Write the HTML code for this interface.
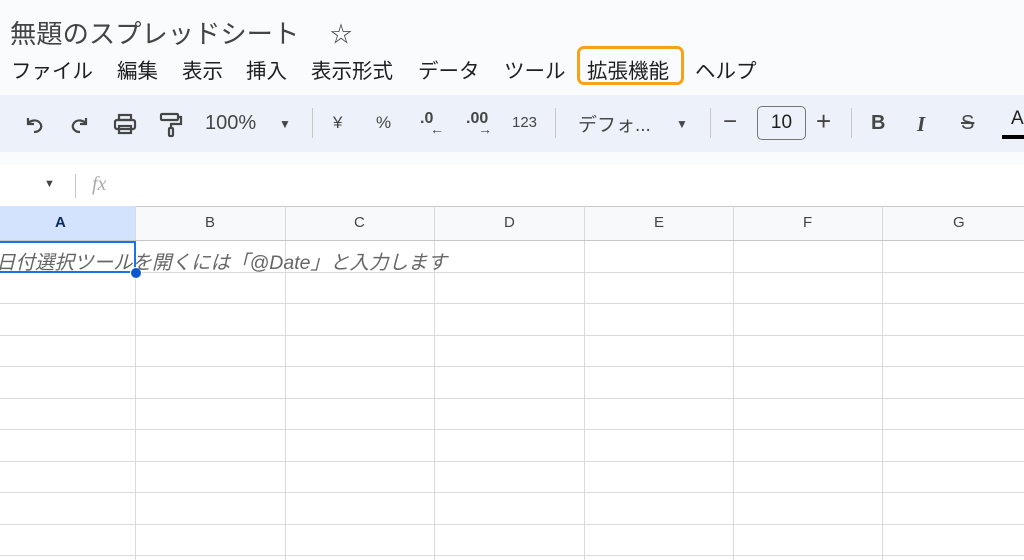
<!DOCTYPE html>
<html><head><meta charset="utf-8"><style>
*{margin:0;padding:0;box-sizing:border-box}
body{width:1024px;height:560px;overflow:hidden;background:#fff;font-family:"Liberation Sans","Noto Sans CJK JP",sans-serif;position:relative;color:#444746}
.a{position:absolute;white-space:nowrap}
.top{position:absolute;left:0;top:0;width:1024px;height:165px;background:#f9fbfd}
.tb{position:absolute;left:0;top:95px;width:1024px;height:57px;background:#edf2fa;border-radius:0}
.menu{font-size:20.5px;color:#1f1f1f;top:54px}
.ti{font-size:17px;color:#444746;top:113px}
.sep{position:absolute;top:108px;width:1px;height:30px;background:#c7c7c7}
.col{position:absolute;top:206px;height:354px;width:1px;background:#dadada}
.row{position:absolute;left:0;width:1024px;height:1px;background:#dadada}
.ch{position:absolute;top:214px;font-size:15px;color:#444}
</style></head><body>
<div class="top"></div>
<div class="a" style="left:10px;top:12px;font-size:26.3px;color:#444">無題のスプレッドシート</div>
<div class="a" style="left:330px;top:17px;font-size:22px;color:#444">☆</div>
<div class="a menu" style="left:11px">ファイル</div>
<div class="a menu" style="left:117px">編集</div>
<div class="a menu" style="left:182px">表示</div>
<div class="a menu" style="left:246px">挿入</div>
<div class="a menu" style="left:311px">表示形式</div>
<div class="a menu" style="left:418px">データ</div>
<div class="a menu" style="left:504px">ツール</div>
<div style="position:absolute;left:577px;top:46px;width:107px;height:39px;border:3px solid #f7a21a;border-radius:7px"></div>
<div class="a menu" style="left:587px">拡張機能</div>
<div class="a menu" style="left:695px">ヘルプ</div>
<div class="tb"></div>
<svg class="a" style="left:20px;top:110px" width="30" height="30" viewBox="0 0 30 30" fill="none" stroke="#444746" stroke-width="2.2"><path d="M8 8v6h6"/><path d="M8 14c2-4 9-5 12-1s0 9-6 9"/></svg>
<svg class="a" style="left:64px;top:110px" width="30" height="30" viewBox="0 0 30 30" fill="none" stroke="#444746" stroke-width="2.2"><path d="M22 8v6h-6"/><path d="M22 14c-2-4-9-5-12-1s0 9 6 9"/></svg>
<svg class="a" style="left:110px;top:110px" width="30" height="30" viewBox="0 0 30 30" fill="none" stroke="#444746" stroke-width="2.2"><rect x="9" y="5" width="12" height="5"/><rect x="5" y="10" width="20" height="9" rx="2"/><rect x="9" y="16" width="12" height="7"/></svg>
<svg class="a" style="left:156px;top:110px" width="30" height="30" viewBox="0 0 30 30" fill="none" stroke="#444746" stroke-width="2.2"><rect x="5" y="4" width="17" height="6" rx="1"/><path d="M22 7h3v7H15v4"/><rect x="13" y="18" width="4" height="8" rx="1"/></svg>
<div class="a ti" style="left:205px;font-size:20px;top:112px">100%</div>
<div class="a" style="left:279px;top:117px;font-size:12px">▼</div>
<div class="sep" style="left:312px"></div>
<div class="a ti" style="left:333px">¥</div>
<div class="a ti" style="left:376px">%</div>
<div class="a ti" style="left:420px;font-weight:bold;font-size:16px;top:110px">.0</div>
<div class="a" style="left:430px;top:121px;font-size:14px;color:#444">←</div>
<div class="a ti" style="left:466px;font-weight:bold;font-size:16px;top:110px">.00</div>
<div class="a" style="left:478px;top:121px;font-size:14px;color:#444">→</div>
<div class="a ti" style="left:512px;font-size:15px;top:114px">123</div>
<div class="sep" style="left:555px"></div>
<div class="a ti" style="left:578px;font-size:19px;top:110px">デフォ...</div>
<div class="a" style="left:676px;top:117px;font-size:12px">▼</div>
<div class="sep" style="left:710px"></div>
<div class="a" style="left:723px;top:108px;font-size:24px;color:#444">−</div>
<div style="position:absolute;left:757px;top:106px;width:49px;height:34px;border:1px solid #747775;border-radius:5px;font-size:19px;text-align:center;line-height:32px;color:#1f1f1f">10</div>
<div class="a" style="left:816px;top:106px;font-size:26px;color:#444">+</div>
<div class="sep" style="left:851px"></div>
<div class="a" style="left:871px;top:112px;font-size:20px;font-weight:bold">B</div>
<div class="a" style="left:917px;top:112px;font-size:21px;font-style:italic;font-family:'Liberation Serif',serif;font-weight:bold">I</div>
<div class="a" style="left:961px;top:112px;font-size:20px;text-decoration:line-through">S</div>
<div class="a" style="left:1011px;top:108px;font-size:19px;color:#1f1f1f">A</div>
<div style="position:absolute;left:1002px;top:135px;width:22px;height:4px;background:#000"></div>
<div class="a" style="left:44px;top:178px;font-size:11px;color:#444">▼</div>
<div style="position:absolute;left:75px;top:174px;width:1px;height:24px;background:#c7c7c7"></div>
<div class="a" style="left:92px;top:173px;font-size:20px;font-style:italic;font-family:'Liberation Serif',serif;color:#aaa">fx</div>
<div style="position:absolute;left:0;top:206px;width:1024px;height:34px;background:#f8f9fa;border-top:1px solid #c7c7c7"></div>
<div style="position:absolute;left:0;top:206px;width:135px;height:34px;background:#d3e3fd"></div>
<div class="col" style="left:135px"></div><div class="col" style="left:285px"></div><div class="col" style="left:434px"></div><div class="col" style="left:584px"></div><div class="col" style="left:733px"></div><div class="col" style="left:882px"></div>
<div class="row" style="top:240px;background:#c7c7c7"></div>
<div class="row" style="top:272px"></div><div class="row" style="top:303px"></div><div class="row" style="top:335px"></div><div class="row" style="top:366px"></div><div class="row" style="top:398px"></div><div class="row" style="top:429px"></div><div class="row" style="top:461px"></div><div class="row" style="top:492px"></div><div class="row" style="top:524px"></div><div class="row" style="top:555px"></div>
<div class="ch" style="left:55px;font-weight:bold;color:#0b2b5c">A</div>
<div class="ch" style="left:205px">B</div><div class="ch" style="left:354px">C</div><div class="ch" style="left:504px">D</div><div class="ch" style="left:654px">E</div><div class="ch" style="left:803px">F</div><div class="ch" style="left:953px">G</div>
<div style="position:absolute;left:-3px;top:241px;width:139px;height:32px;border:2px solid #1a73e8"></div>
<div style="position:absolute;left:130px;top:267px;width:12px;height:12px;border-radius:50%;background:#0b57d0;border:1px solid #fff"></div>
<div class="a" style="left:-4px;top:246px;font-size:19.5px;font-style:italic;color:#666">日付選択ツールを開くには「@Date」と入力します</div>
</body></html>
